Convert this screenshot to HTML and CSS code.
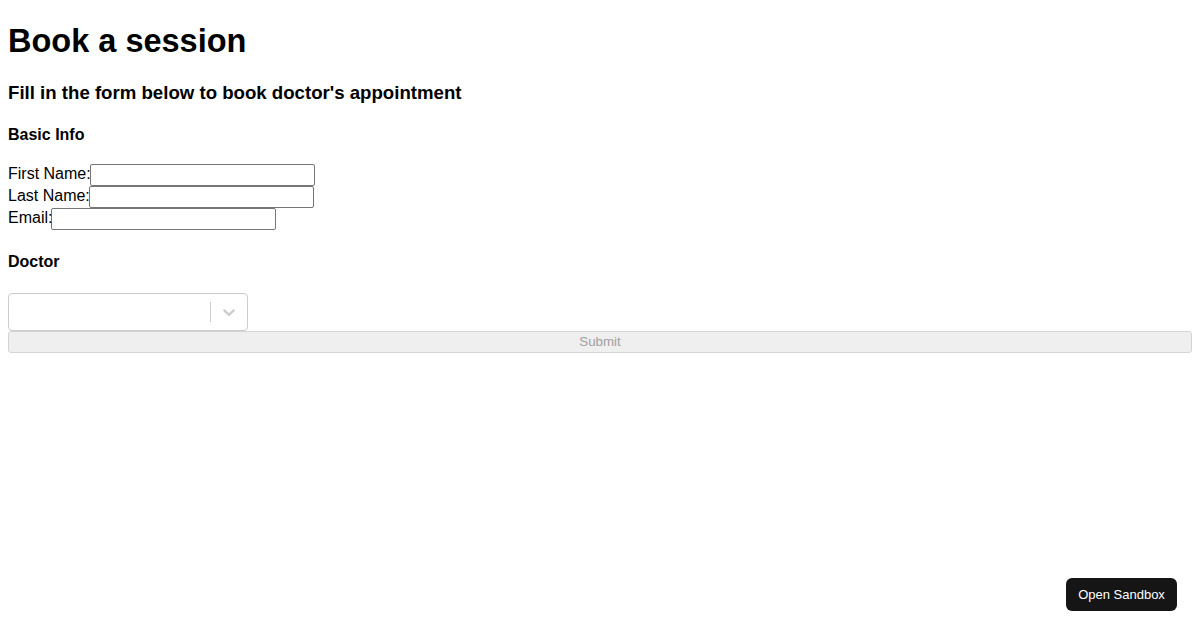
FILE: index.html
```html
<!DOCTYPE html>
<html>
<head>
<meta charset="utf-8">
<link rel="stylesheet" href="styles.css">
</head>
<body>
<h1>Book a session</h1>
<h3>Fill in the form below to book doctor's appointment</h3>
<form class="form">
  <h4 class="section-basic">Basic Info</h4>
  <div class="row"><label>First Name:</label><input class="field" type="text"></div>
  <div class="row"><label>Last Name:</label><input class="field" type="text"></div>
  <div class="row"><label>Email:</label><input class="field" type="email"></div>
  <h4 class="section-doctor">Doctor</h4>
  <div class="select">
    <div class="select-value"></div>
    <div class="select-indicators">
      <span class="select-sep"></span>
      <span class="select-arrow">
        <svg width="20" height="20" viewBox="0 0 20 20" aria-hidden="true"><path fill="#ccc" d="M4.516 7.548c0.436-0.446 1.043-0.481 1.576 0l3.908 3.747 3.908-3.747c0.533-0.481 1.141-0.446 1.574 0 0.436 0.445 0.408 1.197 0 1.615-0.406 0.418-4.695 4.502-4.695 4.502-0.217 0.223-0.502 0.335-0.787 0.335s-0.57-0.112-0.789-0.335c0 0-4.287-4.084-4.695-4.502s-0.436-1.170 0-1.615z"></path></svg>
      </span>
    </div>
  </div>
  <button class="submit" type="submit" disabled>Submit</button>
</form>
<button class="sandbox" type="button">Open Sandbox</button>
</body>
</html>
```
FILE: styles.css
```css
html, body {
  font-family: "Liberation Sans", Arial, sans-serif;
  color: #000;
  background: #fff;
}
body {
  margin: 0 8px 8px;
}
h1 {
  font-size: 32.5px;
  margin: 23px 0 22px;
}
h3 {
  font-size: 18.64px;
  margin: 18.72px 0 21.72px;
}
h4 {
  font-size: 16px;
  margin: 21.28px 0;
}
.section-basic {
  margin-bottom: 20.28px;
}
.section-doctor {
  margin-top: 23.28px;
}
.row {
  display: flex;
  align-items: center;
  height: 22px;
  font-size: 16px;
}
.row label {
  position: relative;
  top: -1px;
  margin-right: -1px;
}
.field {
  box-sizing: border-box;
  width: 225px;
  height: 22px;
  margin: 0;
  padding: 1px 2px;
  border: 1px solid #767676;
  border-radius: 2px;
  font-family: "Liberation Sans", Arial, sans-serif;
  font-size: 13.33px;
}
.select {
  box-sizing: border-box;
  width: 240px;
  height: 38px;
  border: 1px solid #ccc;
  border-radius: 4px;
  display: flex;
  align-items: center;
  background: #fff;
}
.select-value {
  flex: 1;
}
.select-indicators {
  display: flex;
  align-items: center;
  align-self: stretch;
}
.select-sep {
  width: 1px;
  background: #ccc;
  align-self: stretch;
  margin: 8px 0;
}
.select-arrow {
  display: flex;
  padding: 8px;
}
.submit {
  display: block;
  box-sizing: border-box;
  width: 100%;
  height: 22px;
  margin: 0;
  border: 1px solid #d4d4d4;
  border-radius: 3px;
  background: #efefef;
  color: #a0a0a0;
  font-family: "Liberation Sans", Arial, sans-serif;
  font-size: 13.33px;
}
.sandbox {
  position: fixed;
  right: 23px;
  bottom: 19px;
  width: 111px;
  height: 33px;
  border: none;
  border-radius: 6px;
  background: #151515;
  color: #fff;
  font-family: "Liberation Sans", Arial, sans-serif;
  font-size: 13px;
}
```
